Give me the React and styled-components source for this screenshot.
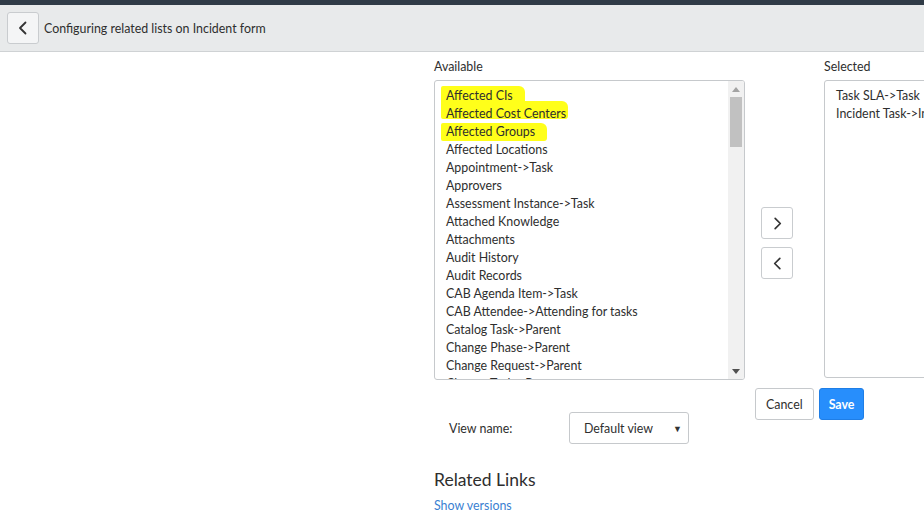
import React from "react";
import styled, { createGlobalStyle } from "styled-components";

const GlobalStyle = createGlobalStyle`
  html, body {
    margin: 0;
    padding: 0;
    background: #fff;
    overflow: hidden;
  }
  body {
    font-family: "Lato", "Liberation Sans", sans-serif;
    font-size: 12.4px;
    color: #2e2e2e;
  }
`;

const available = [
  { label: "Affected CIs", mark: { w: 84, top: -1, h: 18 } },
  { label: "Affected Cost Centers", mark: { w: 127, top: -4, h: 18 } },
  { label: "Affected Groups", mark: { w: 106, top: 0, h: 18 } },
  { label: "Affected Locations" },
  { label: "Appointment->Task" },
  { label: "Approvers" },
  { label: "Assessment Instance->Task" },
  { label: "Attached Knowledge" },
  { label: "Attachments" },
  { label: "Audit History" },
  { label: "Audit Records" },
  { label: "CAB Agenda Item->Task" },
  { label: "CAB Attendee->Attending for tasks" },
  { label: "Catalog Task->Parent" },
  { label: "Change Phase->Parent" },
  { label: "Change Request->Parent" },
  { label: "Change Task->Parent" },
];

const selected = ["Task SLA->Task", "Incident Task->Incident"];

const TopStrip = styled.div`
  height: 5px;
  background: #303b47;
`;

const Header = styled.header`
  height: 46px;
  background: #e8eaeb;
  border-bottom: 1px solid #cfd2d4;
  display: flex;
  align-items: center;
  padding-left: 7px;
  gap: 5px;
`;

const IconButton = styled.button`
  width: 32px;
  height: 32px;
  padding: 0;
  display: flex;
  align-items: center;
  justify-content: center;
  background: ${(p) => (p.$light ? "#fff" : "#f4f5f6")};
  border: 1px solid #c9cccf;
  border-radius: 3px;
  color: #333;
  cursor: pointer;
`;

const Title = styled.h1`
  margin: 0;
  font-size: 12.4px;
  font-weight: 400;
  color: #2e2e2e;
`;

const Main = styled.main`
  padding-left: 434px;
  padding-top: 5px;
  width: 700px;
`;

const Bucket = styled.div`
  display: grid;
  grid-template-columns: 311px 79px 311px;
`;

const Column = styled.div`
  display: flex;
  flex-direction: column;
`;

const Label = styled.div`
  height: 23px;
  line-height: 20px;
  color: #2e2e2e;
`;

const ListBox = styled.div`
  position: relative;
  height: ${(p) => p.$h}px;
  border: 1px solid #c6c9cc;
  border-radius: 3px;
  overflow: hidden;
  padding: 6px 0 0 11px;
  box-sizing: border-box;
`;

const Row = styled.div`
  position: relative;
  height: 18px;
  line-height: 18px;
  white-space: nowrap;
  color: #2e2e2e;
  z-index: 0;

  &::before {
    content: "";
    display: ${(p) => (p.$mark ? "block" : "none")};
    position: absolute;
    z-index: -1;
    left: -5px;
    top: ${(p) => (p.$mark ? p.$mark.top : 0)}px;
    width: ${(p) => (p.$mark ? p.$mark.w : 0)}px;
    height: ${(p) => (p.$mark ? p.$mark.h : 0)}px;
    background: #ffff1a;
    border-radius: 2px 6px 3px 2px;
  }
`;

const ScrollTrack = styled.div`
  position: absolute;
  top: 0;
  right: 0;
  bottom: 0;
  width: 16px;
  background: #f1f1f1;
  display: flex;
  flex-direction: column;
  align-items: center;
`;

const ScrollArrow = styled.div`
  height: 16px;
  display: flex;
  align-items: center;
  justify-content: center;
  width: 100%;
`;

const Thumb = styled.div`
  width: 12px;
  height: 50px;
  background: #c1c1c1;
  flex-shrink: 0;
`;

const Spacer = styled.div`
  flex: 1;
`;

const Mover = styled.div`
  padding-top: 150px;
  padding-left: 16px;
  display: flex;
  flex-direction: column;
  gap: 8px;
`;

const Actions = styled.div`
  display: flex;
  gap: 5px;
  margin: 8px 0 0 321px;
`;

const Button = styled.button`
  height: 32px;
  padding: 0 ${(p) => (p.$primary ? 9 : 10)}px;
  border-radius: 3px;
  font-family: inherit;
  font-size: 12.4px;
  font-weight: ${(p) => (p.$primary ? 700 : 400)};
  color: ${(p) => (p.$primary ? "#fff" : "#2e2e2e")};
  background: ${(p) => (p.$primary ? "#278efc" : "#fff")};
  border: 1px solid ${(p) => (p.$primary ? "#1f7ee6" : "#c6c9cc")};
  cursor: pointer;
`;

const ViewRow = styled.div`
  display: flex;
  align-items: flex-start;
  padding-left: 15px;
`;

const ViewLabel = styled.span`
  width: 120px;
  padding-top: 1px;
  line-height: 16px;
`;

const Select = styled.div`
  width: 120px;
  height: 32px;
  box-sizing: border-box;
  border: 1px solid #c6c9cc;
  border-radius: 3px;
  display: flex;
  align-items: center;
  justify-content: space-between;
  padding: 0 6px 0 14px;
  margin-top: -8px;
  color: #2e2e2e;
`;

const Caret = styled.span`
  font-size: 9px;
  color: #333;
`;

const SectionTitle = styled.h2`
  margin: 24px 0 0;
  font-size: 17.5px;
  font-weight: 400;
  color: #2e2e2e;
  line-height: 24px;
`;

const Link = styled.a`
  display: inline-block;
  margin-top: 6px;
  color: #3b7fd1;
  text-decoration: none;
`;

const Chevron = ({ dir = "left", size = 16 }) => (
  <svg width={size} height={size} viewBox="0 0 16 16" fill="none">
    <path
      d={dir === "left" ? "M10.5 2.5 5 8l5.5 5.5" : "M5.5 2.5 11 8l-5.5 5.5"}
      stroke="#333"
      strokeWidth="1.8"
      strokeLinecap="round"
      strokeLinejoin="round"
    />
  </svg>
);

const Tri = ({ up }) => (
  <svg width="8" height="5" viewBox="0 0 8 5">
    <path d={up ? "M0 5 4 0 8 5Z" : "M0 0 4 5 8 0Z"} fill={up ? "#a3a3a3" : "#505050"} />
  </svg>
);

export default function App() {
  return (
    <>
      <GlobalStyle />
      <TopStrip />
      <Header>
        <IconButton aria-label="Back">
          <Chevron dir="left" size={16} />
        </IconButton>
        <Title>Configuring related lists on Incident form</Title>
      </Header>
      <Main>
        <Bucket>
          <Column>
            <Label>Available</Label>
            <ListBox $h={300}>
              {available.map((item) => (
                <Row key={item.label} $mark={item.mark}>
                  {item.label}
                </Row>
              ))}
              <ScrollTrack>
                <ScrollArrow>
                  <Tri up />
                </ScrollArrow>
                <Thumb />
                <Spacer />
                <ScrollArrow>
                  <Tri />
                </ScrollArrow>
              </ScrollTrack>
            </ListBox>
          </Column>
          <Mover>
            <IconButton $light aria-label="Add">
              <Chevron dir="right" size={15} />
            </IconButton>
            <IconButton $light aria-label="Remove">
              <Chevron dir="left" size={15} />
            </IconButton>
          </Mover>
          <Column>
            <Label>Selected</Label>
            <ListBox $h={298}>
              {selected.map((s) => (
                <Row key={s}>{s}</Row>
              ))}
            </ListBox>
          </Column>
        </Bucket>
        <Actions>
          <Button>Cancel</Button>
          <Button $primary>Save</Button>
        </Actions>
        <ViewRow>
          <ViewLabel>View name:</ViewLabel>
          <Select>
            <span>Default view</span>
            <Caret>▼</Caret>
          </Select>
        </ViewRow>
        <SectionTitle>Related Links</SectionTitle>
        <Link href="#">Show versions</Link>
      </Main>
    </>
  );
}
